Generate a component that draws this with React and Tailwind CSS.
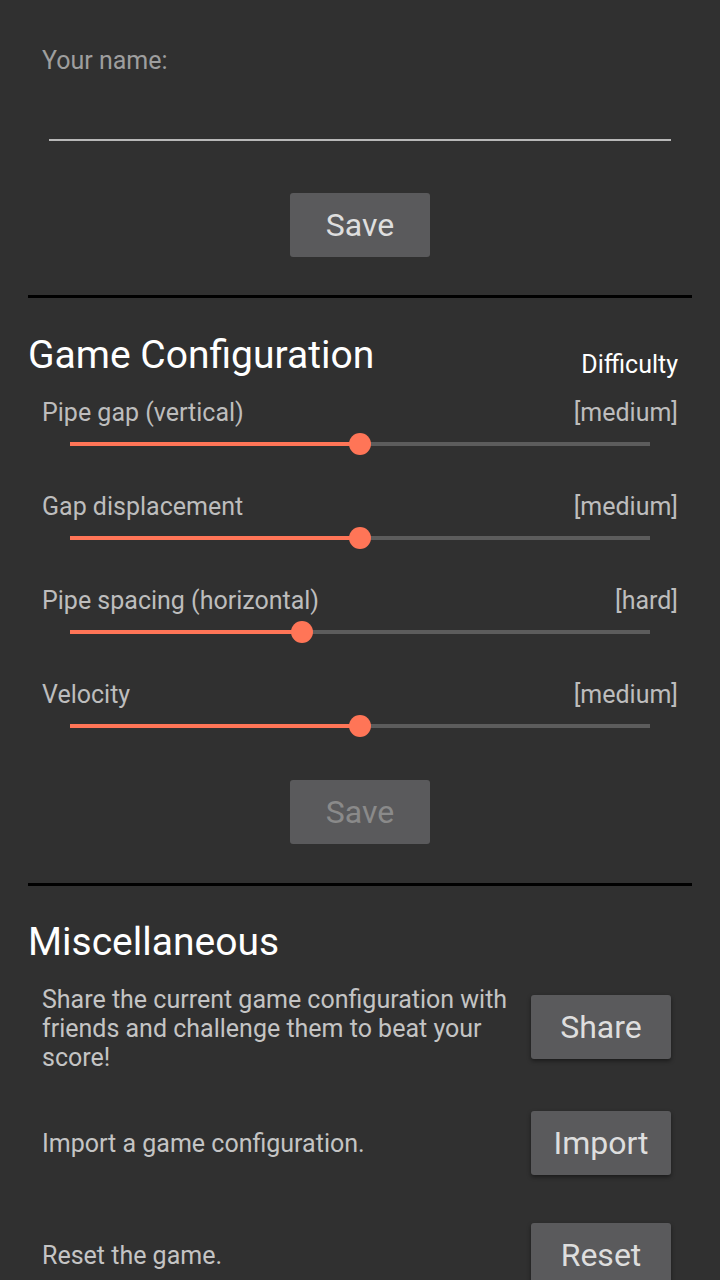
const sliders = [
  { label: "Pipe gap (vertical)", value: "[medium]", pct: 50 },
  { label: "Gap displacement", value: "[medium]", pct: 50 },
  { label: "Pipe spacing (horizontal)", value: "[hard]", pct: 40 },
  { label: "Velocity", value: "[medium]", pct: 50 },
];

const Slider = ({ pct }) => (
  <div className="relative mx-[42px] h-[36px]">
    <div className="absolute left-0 right-0 top-[16px] h-[4px] bg-[#5c5c5c]" />
    <div className="absolute left-0 top-[16px] h-[4px] bg-[#ff7557]" style={{ width: `${pct}%` }} />
    <div
      className="absolute top-[7px] h-[22px] w-[22px] -translate-x-1/2 rounded-full bg-[#ff7557]"
      style={{ left: `${pct}%` }}
    />
  </div>
);

const MiscRow = ({ text, button, className, btnClass = "" }) => (
  <div className={`flex items-center pl-[14px] pr-[21px] ${className}`}>
    <p className="flex-1 text-[25px] leading-[29px] text-[#c4c4c4]">{text}</p>
    <button
      className={`ml-[16px] h-[64px] w-[140px] shrink-0 rounded-[3px] bg-[#5a5a5c] text-[32px] text-[#dedede] shadow-[0_2px_4px_rgba(0,0,0,0.45)] ${btnClass}`}
    >
      {button}
    </button>
  </div>
);

export default function App() {
  return (
    <div className="min-h-[1280px] w-[720px] overflow-hidden bg-[#303030] px-[28px] font-['Roboto',sans-serif]">
      {/* Name */}
      <div className="pl-[14px] pt-[48px] text-[25px] leading-[26px] text-[#9e9e9e]">Your name:</div>
      <div className="mx-[21px] mt-[26px] h-[41px] border-b-2 border-[#b8b8b8]" />
      <div className="mt-[52px] flex justify-center">
        <button className="h-[64px] w-[140px] rounded-[3px] bg-[#5a5a5c] text-[32px] text-[#dedede]">Save</button>
      </div>
      <div className="mt-[38px] h-[3px] bg-black" />

      {/* Game configuration */}
      <div className="mt-[36px] flex items-end justify-between">
        <h2 className="text-[39px] leading-[42px] text-white">Game Configuration</h2>
        <span className="mb-[-2px] pr-[14px] text-[25px] leading-[26px] text-white">Difficulty</span>
      </div>
      <div className="mt-[24px]">
        {sliders.map((s, i) => (
          <div key={s.label} className={i < sliders.length - 1 ? "mb-[32px]" : ""}>
            <div className="flex justify-between px-[14px] text-[25px] leading-[26px] text-[#bdbdbd]">
              <span>{s.label}</span>
              <span>{s.value}</span>
            </div>
            <Slider pct={s.pct} />
          </div>
        ))}
      </div>
      <div className="mt-[36px] flex justify-center">
        <button className="h-[64px] w-[140px] rounded-[3px] bg-[#5a5a5c] text-[32px] text-[#8a8a8a]">Save</button>
      </div>
      <div className="mt-[39px] h-[3px] bg-black" />

      {/* Misc */}
      <h2 className="mt-[35px] text-[39px] leading-[42px] text-white">Miscellaneous</h2>
      <MiscRow
        className="mt-[22px]"
        btnClass="-mt-[4px]"
        text="Share the current game configuration with friends and challenge them to beat your score!"
        button="Share"
      />
      <MiscRow className="mt-[39px]" text="Import a game configuration." button="Import" />
      <MiscRow className="mt-[48px]" text="Reset the game." button="Reset" />
    </div>
  );
}
